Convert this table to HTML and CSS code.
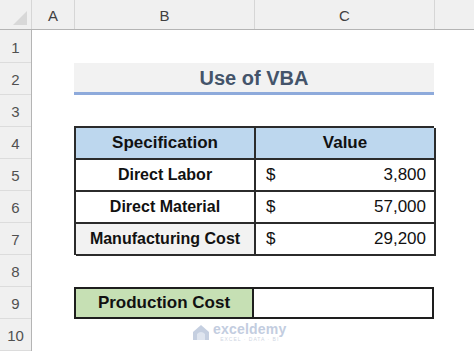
FILE: index.html
```html
<!DOCTYPE html>
<html>
<head>
<meta charset="utf-8">
<link rel="stylesheet" href="styles.css">
</head>
<body>
<div class="sheet">
  <div class="colbar">
    <div class="corner"><span class="tri"></span></div>
    <div class="ch ch-a">A</div>
    <div class="ch ch-b">B</div>
    <div class="ch ch-c">C</div>
    <div class="ch ch-d"></div>
  </div>
  <div class="body">
    <div class="rowbar">
      <div class="rh rh1">1</div>
      <div class="rh">2</div>
      <div class="rh">3</div>
      <div class="rh">4</div>
      <div class="rh">5</div>
      <div class="rh">6</div>
      <div class="rh">7</div>
      <div class="rh">8</div>
      <div class="rh">9</div>
      <div class="rh">10</div>
    </div>
    <div class="cells">
      <div class="title">Use of VBA</div>
      <div class="table">
        <div class="hd">Specification</div>
        <div class="hd hd-r">Value</div>
        <div class="lbl">Direct Labor</div>
        <div class="val"><span>$</span><span>3,800</span></div>
        <div class="lbl">Direct Material</div>
        <div class="val"><span>$</span><span>57,000</span></div>
        <div class="lbl lbl-gray">Manufacturing Cost</div>
        <div class="val"><span>$</span><span>29,200</span></div>
      </div>
      <div class="prod">
        <div class="prod-l">Production Cost</div>
        <div class="prod-r"></div>
      </div>
      <div class="mark">
        <svg class="mark-ico" width="18" height="18" viewBox="0 0 18 18">
          <path d="M1 9 L9 2 L17 9 L17 17 L1 17 Z" fill="#c5cfe0"/>
          <path d="M5 17 L5 11 Q9 7 13 11 L13 17 Z" fill="#dfe5ef"/>
        </svg>
        <div class="mark-txt">
          <span class="mark-name">exceldemy</span>
          <span class="mark-sub">EXCEL · DATA · BI</span>
        </div>
      </div>
    </div>
  </div>
</div>
</body>
</html>
```
FILE: styles.css
```css
* { box-sizing: border-box; }
html, body { margin: 0; padding: 0; background: #fff; }
body { width: 474px; height: 351px; overflow: hidden; font-family: "Liberation Sans", Arial, sans-serif; }
.sheet { display: flex; flex-direction: column; width: 474px; height: 351px; }
.colbar { display: flex; height: 30px; background: #f0f0f0; border-bottom: 1px solid #b4b4b4; }
.corner { width: 32px; position: relative; border-right: 1px solid #d6d6d6; }
.tri { position: absolute; right: 4px; bottom: 4px; width: 0; height: 0; border-left: 14px solid transparent; border-bottom: 14px solid #d8d8d8; }
.ch { display: flex; align-items: center; justify-content: center; font-size: 15px; color: #404040; border-right: 1px solid #d6d6d6; padding-top: 1px; }
.ch-a { width: 43px; }
.ch-b { width: 180px; }
.ch-c { width: 180px; }
.ch-d { flex: 1; border-right: none; }
.body { display: flex; flex: 1; }
.rowbar { width: 32px; display: flex; flex-direction: column; background: #f0f0f0; border-right: 1px solid #b4b4b4; }
.rh { height: 32px; display: flex; align-items: center; justify-content: center; font-size: 15px; color: #505050; border-bottom: 1px solid #dcdcdc; padding-top: 2px; }
.rh1 { height: 33px; }
.cells { flex: 1; position: relative; display: grid; grid-template-columns: 42px 180px 180px 1fr; grid-template-rows: 33px repeat(9, 32px); }
.title { grid-column: 2 / 4; grid-row: 2; background: #f2f2f2; border-bottom: 3px solid #8eaadb; display: flex; align-items: center; justify-content: center; font-weight: bold; font-size: 20px; color: #44546a; padding-top: 2px; }
.table { grid-column: 2 / 4; grid-row: 4 / 8; display: grid; grid-template-columns: 180px 180px; grid-template-rows: repeat(4, 32px); border-top: 2px solid #2b2b2b; border-left: 2px solid #2b2b2b; margin-top: -1px; }
.table > div { border-right: 2px solid #2b2b2b; border-bottom: 2px solid #2b2b2b; }
.hd { background: #bdd7ee; display: flex; align-items: center; justify-content: center; font-weight: bold; font-size: 17px; color: #111; }
.lbl { display: flex; align-items: center; justify-content: center; font-weight: bold; font-size: 16px; color: #111; background: #fff; }
.lbl-gray { background: #f2f2f2; }
.val { display: flex; align-items: center; justify-content: space-between; padding: 0 8px 0 10px; font-size: 17px; color: #111; }
.prod { grid-column: 2 / 4; grid-row: 9; display: flex; border: 2px solid #1e1e1e; }
.prod-l { width: 178px; background: #c6e0b4; border-right: 2px solid #1e1e1e; display: flex; align-items: center; justify-content: center; font-weight: bold; font-size: 17px; color: #111; }
.prod-r { flex: 1; background: #fff; }
.mark { position: absolute; left: 160px; top: 292px; display: flex; align-items: center; gap: 3px; }
.mark-txt { display: flex; flex-direction: column; align-items: center; line-height: 1; }
.mark-name { font-size: 14px; color: #c3cde0; font-weight: bold; letter-spacing: 0.2px; }
.mark-sub { font-size: 5px; color: #cfd6e3; letter-spacing: 1px; margin-top: 1px; }
```
